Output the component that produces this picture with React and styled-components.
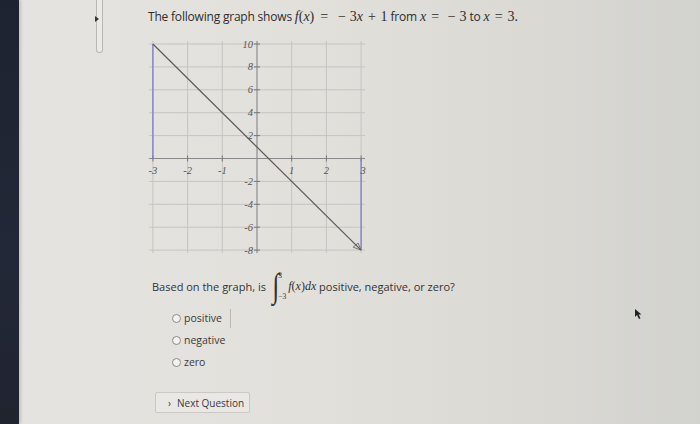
import React from "react";
import styled, { createGlobalStyle } from "styled-components";

const Global = createGlobalStyle`
  html, body { margin: 0; padding: 0; }
  body { width: 700px; height: 424px; overflow: hidden; background: #dedcd7; }
`;

const Page = styled.div`
  position: relative;
  display: flex;
  width: 700px;
  height: 424px;
  background: linear-gradient(90deg, #e6e4e0 0%, #e2e0db 45%, #d9d8d3 80%, #d2d2ce 100%);
  font-family: "Open Sans", "Liberation Sans", sans-serif;
  color: #333;
  overflow: hidden;
`;

const DarkEdge = styled.div`
  width: 19px;
  flex: none;
  background: linear-gradient(180deg, #1e2331 0%, #232838 60%, #20242f 100%);
  box-shadow: 2px 0 3px rgba(0, 0, 0, 0.15);
`;

const Sidebar = styled.div`
  width: 121px;
  flex: none;
  display: flex;
  justify-content: flex-end;
  padding-right: 37px;
  box-sizing: border-box;
`;

const Track = styled.div`
  width: 7px;
  height: 57px;
  margin-top: -4px;
  border: 1px solid #b9b8b5;
  border-top: none;
  border-radius: 0 0 4px 4px;
  background: #eceae6;
  display: flex;
  justify-content: center;
  padding-top: 20px;
  box-sizing: border-box;
`;

const Arrow = styled.div`
  width: 0;
  height: 0;
  border-top: 3px solid transparent;
  border-bottom: 3px solid transparent;
  border-left: 4px solid #333;
  margin-left: -5px;
`;

const Main = styled.div`
  flex: 1;
  display: flex;
  flex-direction: column;
  padding-top: 8px;
`;

const Title = styled.div`
  margin-left: 8px;
  font-size: 12px;
  line-height: 18px;
  letter-spacing: -0.2px;
  color: #2e2e2e;
  white-space: nowrap;
`;

const M = styled.span`
  font-family: "Liberation Serif", "DejaVu Serif", serif;
  font-size: ${(p) => p.$size ?? 14}px;
  letter-spacing: 0;
  font-style: ${(p) => (p.$up ? "normal" : "italic")};
`;

const Op = styled.span`
  font-family: "Liberation Serif", serif;
  font-size: 14px;
  margin: 0 ${(p) => p.$gap ?? 6}px;
`;

const GraphBox = styled.svg`
  display: block;
  margin-top: 8px;
  flex: none;
`;

const Question = styled.div`
  display: flex;
  align-items: center;
  margin-left: 12px;
  margin-top: 5px;
  font-size: 11px;
  color: #333;
  white-space: nowrap;
  height: 34px;
`;

const Integral = styled.span`
  display: inline-flex;
  align-items: center;
  margin: 0 2px 0 5px;
  font-family: "Liberation Serif", serif;
`;

const Sign = styled.span`
  font-size: 34px;
  font-style: italic;
  line-height: 1;
  color: #333;
  transform: scaleX(0.75);
`;

const Limits = styled.span`
  display: flex;
  flex-direction: column;
  justify-content: space-between;
  height: 30px;
  font-size: 7.5px;
  margin-left: -2px;
`;

const Options = styled.div`
  display: flex;
  flex-direction: column;
  gap: 6px;
  margin-left: 32px;
  margin-top: 7px;
`;

const Option = styled.label`
  display: flex;
  align-items: center;
  height: 16px;
  font-size: 10.5px;
  color: #3a3a3a;
`;

const Radio = styled.span`
  width: 7px;
  height: 7px;
  border: 1px solid #8a8a8a;
  border-radius: 50%;
  background: #f3f2ef;
  margin-right: 3px;
  flex: none;
`;

const Caret = styled.span`
  width: 1px;
  height: 19px;
  background: #b8b8b5;
  margin-left: 8px;
`;

const Button = styled.button`
  align-self: flex-start;
  margin-left: 15px;
  margin-top: 22px;
  height: 21px;
  width: 95px;
  display: flex;
  align-items: center;
  gap: 6px;
  padding: 0 0 0 12px;
  border: 1px solid #c9c8c4;
  border-radius: 2px;
  background: #e9e8e4;
  font-family: "Open Sans", "Liberation Sans", sans-serif;
  font-size: 10px;
  color: #3a3a3a;
`;

const Cursor = styled.svg`
  position: absolute;
  left: 634px;
  top: 308px;
`;

const OX = 140;
const OY = 34;
const xp = (v) => 257 + v * 34.7 - OX;
const yp = (v) => 158.5 - v * 11.45 - OY;

function Graph() {
  const xs = [-3, -2, -1, 0, 1, 2, 3];
  const ys = [10, 8, 6, 4, 2, 0, -2, -4, -6, -8];
  const lab = { fontFamily: "Liberation Serif, serif", fontStyle: "italic", fontSize: 10.5, fill: "#555" };
  return (
    <GraphBox width="240" height="230" viewBox="0 0 240 230">
      {ys.map((v) => (
        <line key={"h" + v} x1={xp(-3) - 4} x2={xp(3) + 4} y1={yp(v)} y2={yp(v)} stroke="#c4c4c2" strokeWidth="1" />
      ))}
      {xs.map((v) => (
        <line key={"v" + v} x1={xp(v)} x2={xp(v)} y1={yp(10) - 3} y2={yp(-8) + 3} stroke="#c4c4c2" strokeWidth="1" />
      ))}
      <line x1={xp(-3) - 4} x2={xp(3) + 4} y1={yp(0)} y2={yp(0)} stroke="#8a8a8a" strokeWidth="1" />
      <line x1={xp(0)} x2={xp(0)} y1={yp(10) - 3} y2={yp(-8) + 3} stroke="#8a8a8a" strokeWidth="1" />
      {ys.filter((v) => v !== 0).map((v) => (
        <line key={"ty" + v} x1={xp(0) - 3} x2={xp(0) + 3} y1={yp(v)} y2={yp(v)} stroke="#777" strokeWidth="1" />
      ))}
      {xs.filter((v) => v !== 0).map((v) => (
        <line key={"tx" + v} x1={xp(v)} x2={xp(v)} y1={yp(0) - 3} y2={yp(0) + 3} stroke="#777" strokeWidth="1" />
      ))}
      <line x1={xp(-3)} x2={xp(-3)} y1={yp(10)} y2={yp(0)} stroke="#7b7bd0" strokeWidth="1.3" />
      <line x1={xp(3)} x2={xp(3)} y1={yp(0)} y2={yp(-8)} stroke="#7b7bd0" strokeWidth="1.3" />
      <line x1={xp(-3)} y1={yp(10)} x2={xp(3)} y2={yp(-8)} stroke="#5a5a5a" strokeWidth="1.2" />
      <path d={`M${xp(3) - 8} ${yp(-8) - 3} L${xp(3) - 3} ${yp(-8) - 7} L${xp(3)} ${yp(-8)} Z`} fill="none" stroke="#666" strokeWidth="0.9" />
      {ys.filter((v) => v !== 0).map((v) => (
        <text key={"ly" + v} x={xp(0) - 4} y={yp(v) + 3.5} textAnchor="end" style={lab}>
          {v}
        </text>
      ))}
      {xs.filter((v) => v !== 0).map((v) => (
        <text key={"lx" + v} x={xp(v) + (v === 3 ? 2 : 0)} y={yp(0) + 15} textAnchor="middle" style={lab}>
          {v}
        </text>
      ))}
    </GraphBox>
  );
}

export default function App() {
  return (
    <Page>
      <Global />
      <DarkEdge />
      <Sidebar>
        <Track>
          <Arrow />
        </Track>
      </Sidebar>
      <Main>
        <Title>
          The following graph shows <M>f</M>
          <M $up>(</M>
          <M>x</M>
          <M $up>)</M>
          <Op>=</Op>
          <Op $gap={4}>−</Op>
          <M $up>3</M>
          <M>x</M>
          <Op $gap={5}>+</Op>
          <M $up>1</M> from <M>x</M>
          <Op $gap={5}>=</Op>
          <Op $gap={4}>−</Op>
          <M $up>3</M> to <M>x</M>
          <Op $gap={5}>=</Op>
          <M $up>3.</M>
        </Title>
        <Graph />
        <Question>
          Based on the graph, is
          <Integral>
            <Sign>∫</Sign>
            <Limits>
              <span>3</span>
              <span>−3</span>
            </Limits>
          </Integral>
          <M $size={12}>f</M>
          <M $up $size={12}>(</M>
          <M $size={12}>x</M>
          <M $up $size={12}>)</M>
          <M $size={12}>dx</M>&nbsp;positive, negative, or zero?
        </Question>
        <Options>
          <Option>
            <Radio />
            positive
            <Caret />
          </Option>
          <Option>
            <Radio />
            negative
          </Option>
          <Option>
            <Radio />
            zero
          </Option>
        </Options>
        <Button>
          <span>›</span>
          Next Question
        </Button>
      </Main>
      <Cursor width="10" height="12" viewBox="0 0 10 12">
        <path d="M1 1 L1 9 L3 7 L5 11 L6.5 10.3 L4.6 6.5 L7.5 6.5 Z" fill="#222" />
      </Cursor>
    </Page>
  );
}
